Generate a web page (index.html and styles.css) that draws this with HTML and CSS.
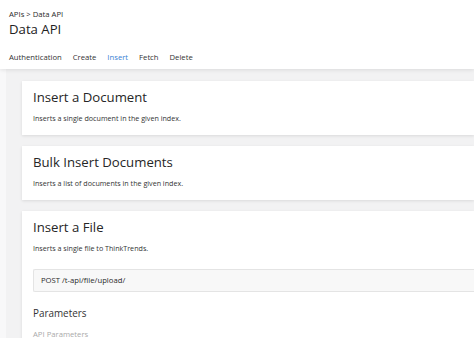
FILE: index.html
```html
<!DOCTYPE html>
<html>
<head>
<meta charset="utf-8">
<link rel="stylesheet" href="styles.css">
</head>
<body>
<header class="header">
  <div class="breadcrumb">APIs &gt; Data API</div>
  <h1 class="page-title">Data API</h1>
  <nav class="tabs">
    <span class="tab">Authentication</span>
    <span class="tab">Create</span>
    <span class="tab active">Insert</span>
    <span class="tab">Fetch</span>
    <span class="tab">Delete</span>
  </nav>
</header>
<div class="layout">
  <aside class="rail"></aside>
  <main class="content">
    <section class="card">
      <h2 class="card-title">Insert a Document</h2>
      <p class="card-desc">Inserts a single document in the given index.</p>
    </section>
    <section class="card">
      <h2 class="card-title">Bulk Insert Documents</h2>
      <p class="card-desc">Inserts a list of documents in the given index.</p>
    </section>
    <section class="card">
      <h2 class="card-title">Insert a File</h2>
      <p class="card-desc">Inserts a single file to ThinkTrends.</p>
      <div class="endpoint">POST /t-api/file/upload/</div>
      <h3 class="section-title">Parameters</h3>
      <p class="section-sub">API Parameters</p>
    </section>
  </main>
</div>
</body>
</html>
```
FILE: styles.css
```css
html, body {
  margin: 0;
  padding: 0;
  overflow: hidden;
  height: 100%;
}
body {
  font-family: "Open Sans", "Noto Sans", sans-serif;
  color: #333;
  background: #f2f2f3;
}
.header {
  position: relative;
  z-index: 2;
  background: #fff;
  padding: 8.5px 9px 5.5px;
  box-shadow: 0 1px 4px rgba(0, 0, 0, 0.10);
}
.breadcrumb {
  font-size: 7.7px;
  line-height: 11px;
  color: #2a2a2a;
}
.page-title {
  margin: 0.7px 0 0;
  font-size: 13.2px;
  line-height: 18px;
  font-weight: 400;
  color: #222;
}
.tabs {
  display: flex;
  gap: 11px;
  margin-top: 14.3px;
  font-size: 7.7px;
  line-height: 11px;
}
.tab { color: #333; }
.tab.active { color: #3a82d4; }
.layout {
  display: flex;
  height: 269px;
  overflow: hidden;
}
.rail {
  width: 6px;
  flex: none;
  background: #f8f8f9;
}
.content {
  flex: 1;
  min-width: 0;
  padding: 12px 0 0 16px;
  display: flex;
  flex-direction: column;
  gap: 11px;
}
.card {
  background: #fff;
  padding: 7px 0 12px 11px;
  box-shadow: 0 1px 3px rgba(0, 0, 0, 0.10);
}
.card-title {
  margin: 0;
  font-size: 13.2px;
  line-height: 18px;
  font-weight: 400;
  color: #262626;
}
.card-desc {
  margin: 7px 0 0;
  font-size: 7.15px;
  line-height: 10px;
  color: #333;
}
.endpoint {
  margin-top: 16px;
  background: #f8f8f8;
  border: 1px solid #e4e4e4;
  border-right: none;
  border-radius: 2px 0 0 2px;
  padding: 5px 7px;
  font-size: 7.7px;
  line-height: 11px;
  color: #2a2a2a;
}
.section-title {
  margin: 15.4px 0 0;
  font-size: 9.9px;
  line-height: 13.5px;
  font-weight: 400;
  color: #333;
}
.section-sub {
  margin: 7.7px 0 0;
  font-size: 7.7px;
  line-height: 11px;
  color: #aaa;
}
```
